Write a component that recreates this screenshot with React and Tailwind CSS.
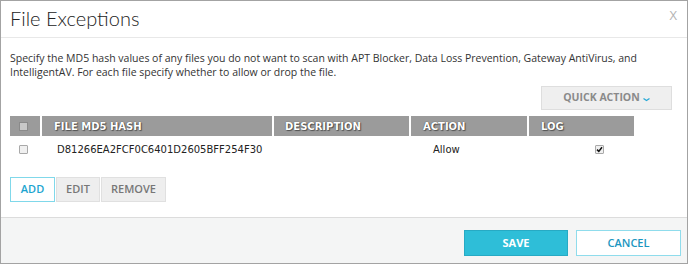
import React from "react";

const hdrShadow = "[text-shadow:0_0_1px_#333,1px_1px_1px_#555]";

function Check({ checked }) {
  return (
    <span className="inline-flex w-[9px] h-[9px] items-center justify-center border border-[#a9a9a9] bg-[#f0f0f0] rounded-[1px]">
      {checked && (
        <svg width="7" height="7" viewBox="0 0 7 7">
          <path d="M1 3.6 L2.8 5.4 L6 1.2" stroke="#111" strokeWidth="1.5" fill="none" />
        </svg>
      )}
    </span>
  );
}

export default function App() {
  return (
    <div className="w-[688px] h-[264px] border border-[#a3a3a3] bg-white flex flex-col font-['Open_Sans',sans-serif]">
      <div className="h-[37px] shrink-0 border-b border-[#e8e8e8] flex items-center justify-between pl-[9px] pr-[10px]">
        <span className="font-['Lato',sans-serif] font-light text-[20px] text-[#222] leading-none pb-[2px]">File Exceptions</span>
        <span className="font-['Open_Sans',sans-serif] text-[13px] text-[#b3b3b3] leading-none pb-[8px]">X</span>
      </div>
      <div className="flex-1 flex flex-col px-[9px] pt-[13px]">
        <p className="text-[10.5px] leading-[14px] text-[#333]">
          Specify the MD5 hash values of any files you do not want to scan with APT Blocker, Data Loss Prevention, Gateway AntiVirus, and
          <br />
          IntelligentAV. For each file specify whether to allow or drop the file.
        </p>
        <div className="flex justify-end mt-[7px] pr-[6px]">
          <button className="w-[131px] h-[24px] bg-[#efefef] border border-[#dedede] flex items-center justify-center gap-[3px] text-[10.5px] font-bold text-[#8a8a8a]">
            QUICK ACTION
            <svg width="7" height="5" viewBox="0 0 7 5" className="mt-[3px]">
              <path d="M0.5 1.5 L3.5 3.5 L6.5 1.5" stroke="#29a9d6" strokeWidth="1.4" fill="none" />
            </svg>
          </button>
        </div>
        <div className="w-[624px] mt-[6px] font-['DejaVu_Sans',sans-serif] text-[10px]">
          <div className={`h-[20px] bg-[#9b9b9b] flex items-center font-bold text-white ${hdrShadow}`}>
            <div className="w-[30px] h-full flex items-center justify-center pr-[3px]">
              <span className="w-[9px] h-[9px] border border-[#8a8a8a] bg-[#c8c8c8]"></span>
            </div>
            <div className="w-[2px] h-full bg-white"></div>
            <div className="w-[230px] pl-[12px]">FILE MD5 HASH</div>
            <div className="w-[2px] h-full bg-white"></div>
            <div className="w-[135px] pl-[11px]">DESCRIPTION</div>
            <div className="w-[2px] h-full bg-white"></div>
            <div className="w-[116px] pl-[12px]">ACTION</div>
            <div className="w-[2px] h-full bg-white"></div>
            <div className="flex-1 pl-[12px]">LOG</div>
          </div>
          <div className="h-[26px] flex items-center text-[#222]">
            <div className="w-[30px] flex justify-center pr-[3px]"><Check /></div>
            <div className="w-[2px]"></div>
            <div className="w-[230px] pl-[15px]">D81266EA2FCF0C6401D2605BFF254F30</div>
            <div className="w-[2px]"></div>
            <div className="w-[135px]"></div>
            <div className="w-[2px]"></div>
            <div className="w-[116px] pl-[22px]">Allow</div>
            <div className="w-[2px]"></div>
            <div className="flex-1 pl-[66px] flex"><Check checked /></div>
          </div>
        </div>
        <div className="flex mt-[15px] gap-[1px] text-[11px] font-semibold">
          <button className="w-[45px] h-[25px] border border-[#80d8ea] bg-white text-[#1ca5d0]">ADD</button>
          <button className="w-[44px] h-[25px] border border-[#e0e0e0] bg-[#eeeeee] text-[#777]">EDIT</button>
          <button className="w-[65px] h-[25px] border border-[#e0e0e0] bg-[#eeeeee] text-[#777]">REMOVE</button>
        </div>
      </div>
      <div className="h-[46px] shrink-0 border-t border-[#dcdcdc] bg-[#f4f5f5] flex justify-end items-start pt-[12px] pr-[6px] gap-[8px]">
        <button className="w-[104px] h-[26px] bg-[#2ebed8] border border-[#27aac4] text-white font-bold text-[11px]">SAVE</button>
        <button className="w-[105px] h-[26px] bg-white border border-[#8fdcec] text-[#1b96c0] font-semibold text-[11px]">CANCEL</button>
      </div>
    </div>
  );
}
